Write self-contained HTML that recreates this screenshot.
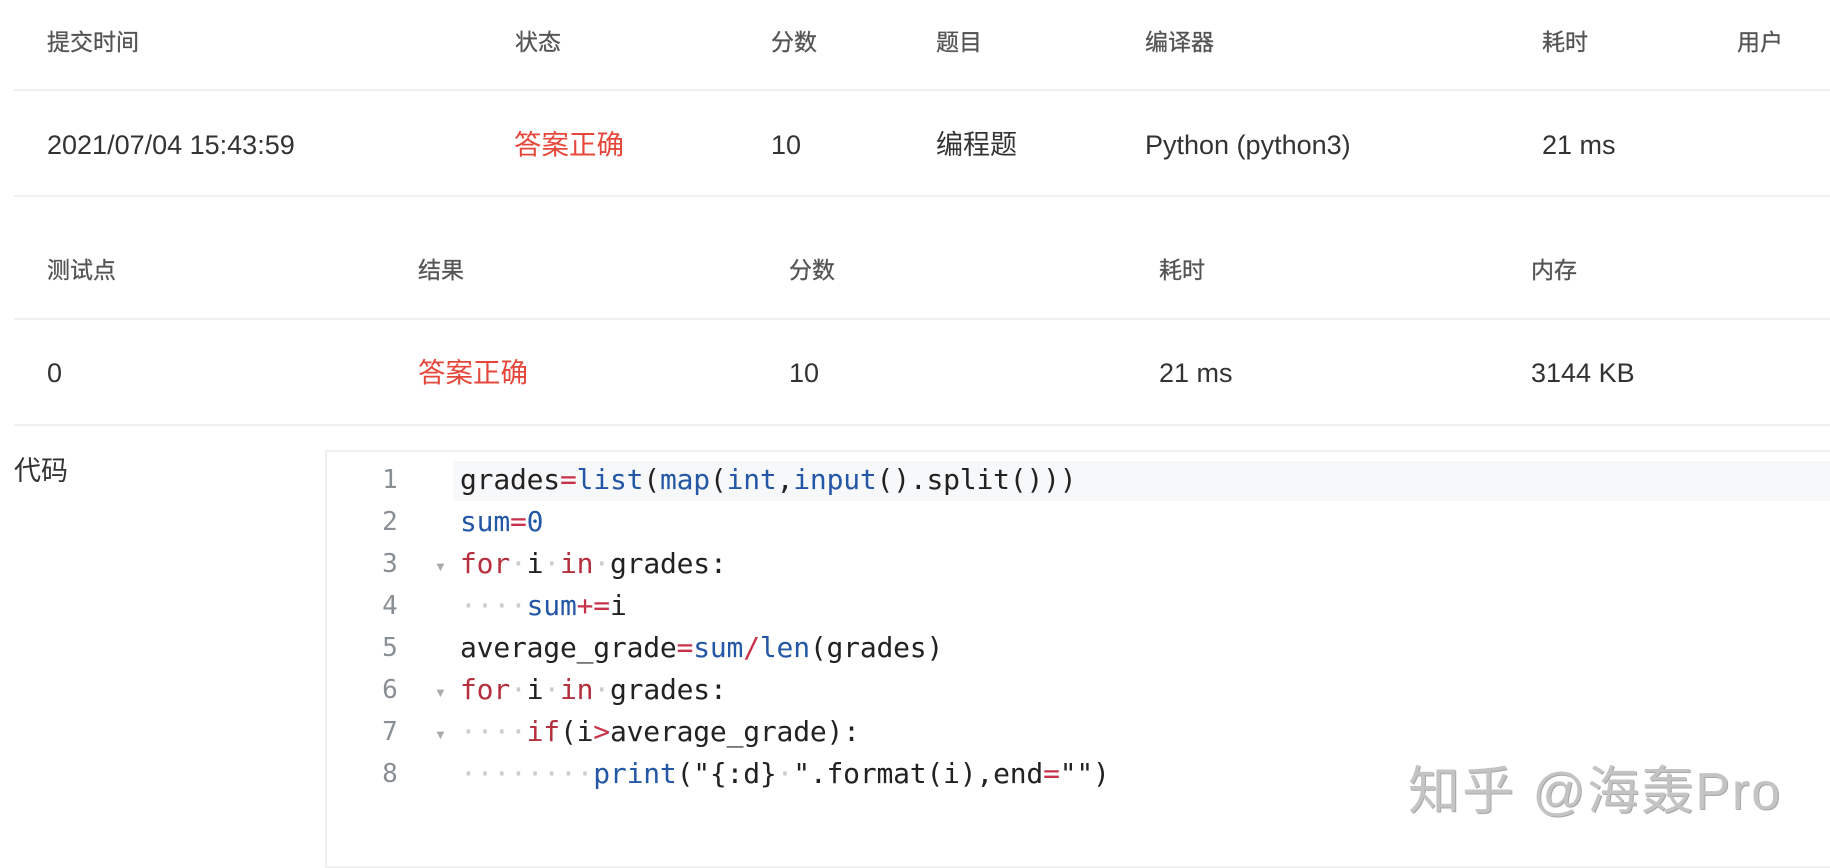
<!DOCTYPE html>
<html><head><meta charset="utf-8"><style>
*{margin:0;padding:0;box-sizing:border-box}
body{width:1830px;height:866px;background:#fff;position:relative;overflow:hidden;font-family:"Liberation Sans","Noto Sans CJK SC",sans-serif}
.a{position:absolute;white-space:nowrap}
.h{font-size:23px;color:#555;font-weight:normal;line-height:28px;-webkit-text-stroke:0.3px #555}
.b{font-size:27px;color:#333;line-height:30px}
.r{color:#e5483b}
.line{position:absolute;left:14px;right:0;height:2px;background:#eeeff1}
.box{position:absolute;left:325px;top:450px;right:-2px;bottom:-2px;border:2px solid #efefef}
.ln{position:absolute;left:375px;width:30px;text-align:center;font-family:"DejaVu Sans Mono","Liberation Mono",monospace;font-size:26px;color:#8a8f95}
.code{position:absolute;left:460px;font-family:"DejaVu Sans Mono","Liberation Mono",monospace;font-size:28px;color:#222;white-space:pre;letter-spacing:-0.2px}
.k{color:#b5303f}.f{color:#2457a6}.o{color:#c8324a}.d{color:#ccc}
.arr{position:absolute;left:434px;font-size:13px;color:#aaa}
</style></head><body>
<div class="a h" style="left:47px;top:28px">提交时间</div>
<div class="a h" style="left:515px;top:28px">状态</div>
<div class="a h" style="left:771px;top:28px">分数</div>
<div class="a h" style="left:936px;top:28px">题目</div>
<div class="a h" style="left:1145px;top:28px">编译器</div>
<div class="a h" style="left:1542px;top:28px">耗时</div>
<div class="a h" style="left:1737px;top:28px">用户</div>
<div class="line" style="top:89px"></div>
<div class="a b" style="left:47px;top:130px">2021/07/04 15:43:59</div>
<div class="a b r" style="left:514px;top:130px;font-size:27.5px">答案正确</div>
<div class="a b" style="left:771px;top:130px">10</div>
<div class="a b" style="left:936px;top:130px">编程题</div>
<div class="a b" style="left:1145px;top:130px">Python (python3)</div>
<div class="a b" style="left:1542px;top:130px">21 ms</div>
<div class="line" style="top:195px"></div>
<div class="a h" style="left:47px;top:256px">测试点</div>
<div class="a h" style="left:418px;top:256px">结果</div>
<div class="a h" style="left:789px;top:256px">分数</div>
<div class="a h" style="left:1159px;top:256px">耗时</div>
<div class="a h" style="left:1531px;top:256px">内存</div>
<div class="line" style="top:318px"></div>
<div class="a b" style="left:47px;top:358px">0</div>
<div class="a b r" style="left:418px;top:358px;font-size:27.5px">答案正确</div>
<div class="a b" style="left:789px;top:358px">10</div>
<div class="a b" style="left:1159px;top:358px">21 ms</div>
<div class="a b" style="left:1531px;top:358px">3144 KB</div>
<div class="line" style="top:424px"></div>
<div class="a" style="left:14px;top:454px;font-size:27px;color:#333;line-height:34px">代码</div>
<div class="box"></div>
<div style="position:absolute;left:453px;right:0;top:461px;height:40px;background:#f7f8fa"></div>
<div class="ln" style="top:465px">1</div><div class="ln" style="top:507px">2</div><div class="ln" style="top:549px">3</div><div class="ln" style="top:591px">4</div><div class="ln" style="top:633px">5</div><div class="ln" style="top:675px">6</div><div class="ln" style="top:717px">7</div><div class="ln" style="top:759px">8</div>
<div class="arr" style="top:559px">▼</div><div class="arr" style="top:685px">▼</div><div class="arr" style="top:727px">▼</div>
<div class="code" style="top:463px">grades<span class="o">=</span><span class="f">list</span>(<span class="f">map</span>(<span class="f">int</span>,<span class="f">input</span>().split()))</div>
<div class="code" style="top:505px"><span class="f">sum</span><span class="o">=</span><span class="f">0</span></div>
<div class="code" style="top:547px"><span class="k">for</span><span class="d">·</span>i<span class="d">·</span><span class="k">in</span><span class="d">·</span>grades:</div>
<div class="code" style="top:589px"><span class="d">····</span><span class="f">sum</span><span class="o">+=</span>i</div>
<div class="code" style="top:631px">average_grade<span class="o">=</span><span class="f">sum</span><span class="o">/</span><span class="f">len</span>(grades)</div>
<div class="code" style="top:673px"><span class="k">for</span><span class="d">·</span>i<span class="d">·</span><span class="k">in</span><span class="d">·</span>grades:</div>
<div class="code" style="top:715px"><span class="d">····</span><span class="k">if</span>(i<span class="o">&gt;</span>average_grade):</div>
<div class="code" style="top:757px"><span class="d">········</span><span class="f">print</span>("{:d}<span class="d">·</span>".format(i),end<span class="o">=</span>"")</div>
<div class="a" style="left:1408px;top:762px;font-size:52px;color:#c4c4c4;line-height:60px;letter-spacing:2px;text-shadow:1px 1px 0 #a8a8a8">知乎 @海轰Pro</div>
</body></html>
